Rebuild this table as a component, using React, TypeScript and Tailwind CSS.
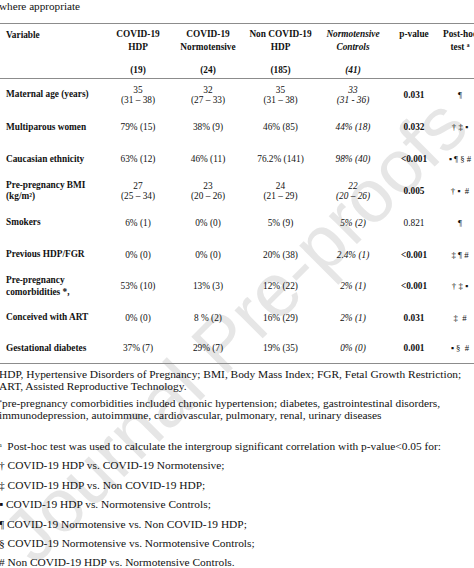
const serif = { fontFamily: '"Liberation Serif", "Times New Roman", serif' };

type Row = {
  label: string[];
  h: string;
  cells: string[][];
  p: string;
  pBold: boolean;
  post: string;
};

const rows: Row[] = [
  { label: ["Maternal age (years)"], h: "h-[32px]", cells: [["35", "(31 – 38)"], ["32", "(27 – 33)"], ["35", "(31 – 38)"], ["33", "(31 - 36)"]], p: "0.031", pBold: true, post: "¶" },
  { label: ["Multiparous women"], h: "h-[33px]", cells: [["79% (15)"], ["38% (9)"], ["46% (85)"], ["44% (18)"]], p: "0.032", pBold: true, post: "† ‡ ▪" },
  { label: ["Caucasian ethnicity"], h: "h-[31px]", cells: [["63% (12)"], ["46% (11)"], ["76.2% (141)"], ["98% (40)"]], p: "<0.001", pBold: true, post: "▪ ¶ § #" },
  { label: ["Pre-pregnancy BMI", "(kg/m²)"], h: "h-[32px]", cells: [["27", "(25 – 34)"], ["23", "(20 – 26)"], ["24", "(21 – 29)"], ["22", "(20 – 26)"]], p: "0.005", pBold: true, post: "† ▪  #" },
  { label: ["Smokers"], h: "h-[32px]", cells: [["6% (1)"], ["0% (0)"], ["5% (9)"], ["5% (2)"]], p: "0.821", pBold: false, post: "¶" },
  { label: ["Previous HDP/FGR"], h: "h-[32px]", cells: [["0% (0)"], ["0% (0)"], ["20% (38)"], ["2.4% (1)"]], p: "<0.001", pBold: true, post: "‡ ¶ #" },
  { label: ["Pre-pregnancy", "comorbidities *,"], h: "h-[31px]", cells: [["53% (10)"], ["13% (3)"], ["12% (22)"], ["2% (1)"]], p: "<0.001", pBold: true, post: "† ‡ ▪" },
  { label: ["Conceived with ART"], h: "h-[32px]", cells: [["0% (0)"], ["8 % (2)"], ["16% (29)"], ["2% (1)"]], p: "0.031", pBold: true, post: "‡  #" },
  { label: ["Gestational diabetes"], h: "h-[29px]", cells: [["37% (7)"], ["29% (7)"], ["19% (35)"], ["0% (0)"]], p: "0.001", pBold: true, post: "▪ §  #" },
];

const legend = [
  "† COVID-19 HDP vs. COVID-19 Normotensive;",
  "‡ COVID-19 HDP vs. Non COVID-19 HDP;",
  "▪ COVID-19 HDP vs. Normotensive Controls;",
  "¶ COVID-19 Normotensive vs. Non COVID-19 HDP;",
  "§ COVID-19 Normotensive vs. Normotensive Controls;",
  "# Non COVID-19 HDP vs. Normotensive Controls.",
];

const cols = "grid grid-cols-[104px_70px_70px_75px_70px_52px_40px]";

function Stack({ lines, className = "" }: { lines: string[]; className?: string }) {
  return (
    <div className={className}>
      {lines.map((l, i) => (
        <div key={i}>{l}</div>
      ))}
    </div>
  );
}

export default function App() {
  return (
    <div className="relative w-[474px] h-[568px] overflow-hidden bg-white text-[#111]" style={serif}>
      {/* watermark */}
      <div
        className="absolute left-[235px] top-[330px] -translate-x-1/2 -translate-y-1/2 -rotate-45 whitespace-nowrap text-[75px] leading-none text-[#e6e6e6]"
        style={{ fontFamily: '"Liberation Sans", Arial, sans-serif' }}
      >
        Journal Pre-proofs
      </div>

      <div className="relative -ml-[1px] w-[481px]">
        <p className="-mt-[1px] text-[11.2px] leading-[14px]">where appropriate</p>

        {/* table */}
        <div className="mt-[10px] border-t-[1.5px] border-b-[1.5px] border-[#8c8c8c] text-[9.3px]">
          <div className={`${cols} h-[39px] pt-[4px] font-bold leading-[12.5px] text-center`}>
            <div className="pl-[7px] text-left pt-[1px]">Variable</div>
            <Stack lines={["COVID-19", "HDP"]} />
            <Stack lines={["COVID-19", "Normotensive"]} />
            <Stack lines={["Non COVID-19", "HDP"]} />
            <Stack lines={["Normotensive", "Controls"]} className="italic" />
            <div>p-value</div>
            <div>
              Post-hoc
              <br />
              test <sup className="text-[5.5px]">a</sup>
            </div>
          </div>
          <div className={`${cols} h-[16px] pt-[1px] font-bold leading-[12.5px] text-center border-b-[1.5px] border-[#8c8c8c]`}>
            <div />
            <div>(19)</div>
            <div>(24)</div>
            <div>(185)</div>
            <div className="italic">(41)</div>
            <div />
            <div />
          </div>

          {rows.map((r, i) => (
            <div key={i} className={`${cols} ${r.h} items-center text-center leading-[10.5px]`}>
              <Stack lines={r.label} className="pl-[7px] text-left font-bold leading-[11.5px]" />
              <Stack lines={r.cells[0]} />
              <Stack lines={r.cells[1]} />
              <Stack lines={r.cells[2]} />
              <Stack lines={r.cells[3]} className="italic" />
              <div className={r.pBold ? "font-bold" : ""}>{r.p}</div>
              <div className="whitespace-pre text-[8.8px]">{r.post}</div>
            </div>
          ))}
        </div>

        {/* notes */}
        <div className="text-[11.4px]">
          <p className="mt-[4px] leading-[12px]">
            HDP, Hypertensive Disorders of Pregnancy; BMI, Body Mass Index; FGR, Fetal Growth Restriction;
            <br />
            ART, Assisted Reproductive Technology.
          </p>
          <p className="mt-[5px] leading-[12px]">
            <sup className="text-[6px]">*</sup>pre-pregnancy comorbidities included chronic hypertension; diabetes, gastrointestinal disorders,
            <br />
            immunodepression, autoimmune, cardiovascular, pulmonary, renal, urinary diseases
          </p>
          <div className="mt-[16px] leading-[19.4px]">
            <p>
              <sup className="text-[6px]">a</sup>&nbsp; Post-hoc test was used to calculate the intergroup significant correlation with p-value&lt;0.05 for:
            </p>
            {legend.map((l, i) => (
              <p key={i}>{l}</p>
            ))}
          </div>
        </div>
      </div>
    </div>
  );
}
